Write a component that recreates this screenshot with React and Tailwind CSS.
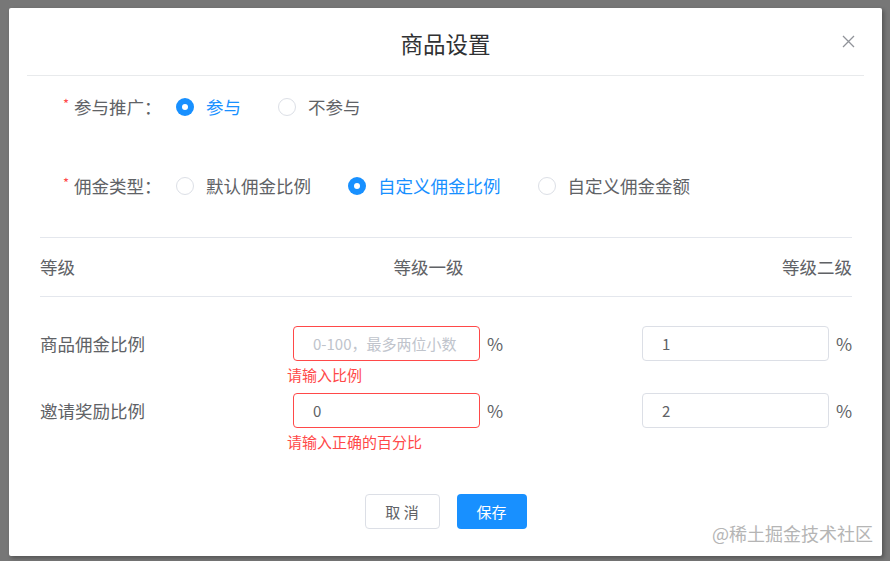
import { useState } from 'react';

const Radio = ({ checked, label, onClick }) => (
  <label onClick={onClick} className="flex items-center mr-[37px] cursor-pointer">
    {checked ? (
      <span className="w-[18px] h-[18px] rounded-full bg-[#1890ff] flex items-center justify-center">
        <span className="w-[6px] h-[6px] rounded-full bg-white" />
      </span>
    ) : (
      <span className="w-[18px] h-[18px] rounded-full border border-[#dcdfe6] bg-white" />
    )}
    <span className={`ml-[12px] ${checked ? 'text-[#1890ff]' : 'text-[#606266]'}`}>{label}</span>
  </label>
);

const FormRow = ({ label, children, className }) => (
  <div className={`flex items-center h-[40px] pl-[54px] ${className}`}>
    <span className="text-[#ff4949] text-[13px] mr-[5px] -mt-[6px]">*</span>
    <span className="text-[#606266] w-[102px]">{label}：</span>
    <div className="flex items-center">{children}</div>
  </div>
);

const RateInput = ({ value, placeholder, error }) => (
  <div className="flex items-center">
    <input
      defaultValue={value}
      placeholder={placeholder}
      className={`w-[187px] h-[35px] rounded-[4px] border px-[19px] text-[15px] text-[#606266] outline-none placeholder:text-[#c0c4cc] ${error ? 'border-[#ff4949]' : 'border-[#dcdfe6]'}`}
    />
    <span className="ml-[7px] text-[#606266]">%</span>
  </div>
);

const App = () => {
  const [join, setJoin] = useState(true);
  const [type, setType] = useState('ratio');

  return (
    <div className="h-[561px] bg-[#777777] pl-[9px] pt-[8px] font-['Noto_Sans_CJK_SC',sans-serif] text-[17.5px] leading-[24px]">
      <div className="relative w-[873px] h-[548px] bg-white rounded-[2px] shadow-[2px_2px_4px_rgba(0,0,0,0.3)] flex flex-col">
        {/* Header */}
        <div className="grid grid-cols-[1fr_auto_1fr] items-center h-[68px] mx-[18px] border-b border-[#e8eaec]">
          <div />
          <h2 className="text-[22.5px] text-[#303133] leading-[30px] mt-[3px]">商品设置</h2>
          <div className="flex justify-end pr-[9px]">
            <svg width="13" height="13" viewBox="0 0 13 13" className="text-[#909399]">
              <path d="M1 1L12 12M12 1L1 12" stroke="currentColor" strokeWidth="1.3" />
            </svg>
          </div>
        </div>

        {/* Form */}
        <FormRow label="参与推广" className="mt-[11px]">
          <Radio checked={join} label="参与" onClick={() => setJoin(true)} />
          <Radio checked={!join} label="不参与" onClick={() => setJoin(false)} />
        </FormRow>
        <FormRow label="佣金类型" className="mt-[39px]">
          <Radio checked={type === 'default'} label="默认佣金比例" onClick={() => setType('default')} />
          <Radio checked={type === 'ratio'} label="自定义佣金比例" onClick={() => setType('ratio')} />
          <Radio checked={type === 'amount'} label="自定义佣金金额" onClick={() => setType('amount')} />
        </FormRow>

        {/* Level table */}
        <div className="mt-[31px] ml-[31px] mr-[30px] text-[#606266]">
          <div className="flex items-center justify-between h-[60px] border-y border-[#e4e7ed]">
            <span>等级</span>
            <span>等级一级</span>
            <span>等级二级</span>
          </div>

          <div className="flex items-center mt-[29px]">
            <span className="w-[253px]">商品佣金比例</span>
            <RateInput placeholder="0-100，最多两位小数" error />
            <div className="ml-auto">
              <RateInput value="1" />
            </div>
          </div>
          <p className="pl-[247px] mt-[4px] text-[15px] leading-[20px] text-[#ff4949]">请输入比例</p>

          <div className="flex items-center mt-[8px]">
            <span className="w-[253px]">邀请奖励比例</span>
            <RateInput value="0" error />
            <div className="ml-auto">
              <RateInput value="2" />
            </div>
          </div>
          <p className="pl-[247px] mt-[4px] text-[15px] leading-[20px] text-[#ff4949]">请输入正确的百分比</p>
        </div>

        {/* Footer */}
        <div className="flex justify-center gap-[17px] mt-[42px]">
          <button className="w-[75px] h-[35px] rounded-[4px] border border-[#dcdfe6] text-[15px] text-[#606266] bg-white">取 消</button>
          <button className="w-[70px] h-[35px] rounded-[4px] bg-[#1890ff] text-[15px] text-white">保存</button>
        </div>

        {/* watermark */}
        <span className="absolute right-[9px] bottom-[11px] text-[18px] leading-[24px] text-[#b5b5b5]">@稀土掘金技术社区</span>
      </div>
    </div>
  );
};

export default App;
